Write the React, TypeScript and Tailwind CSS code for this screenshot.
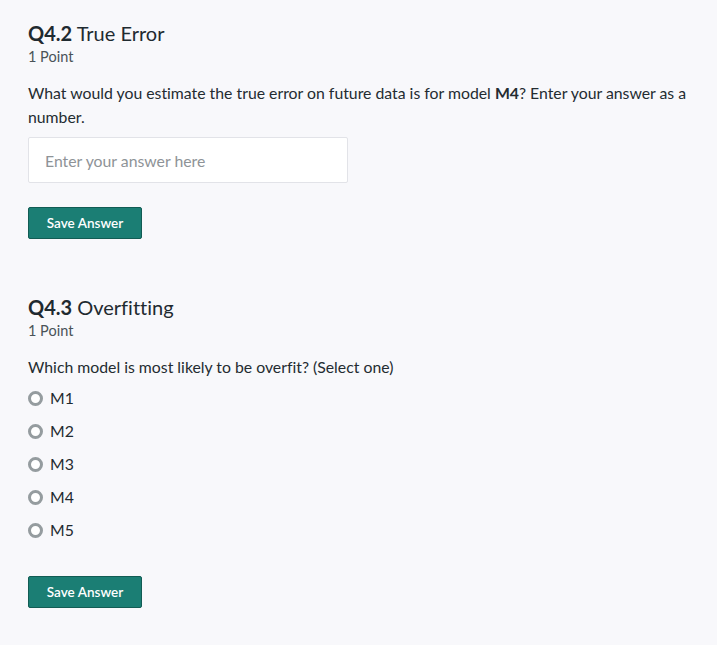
import React from "react";

const font = { fontFamily: "Lato, 'Open Sans', Arial, sans-serif" };

function Header({ num, title }: { num: string; title: string }) {
  return (
    <div>
      <h2 className="text-[20px] leading-[24px] text-[#1f2a30]">
        <span className="font-bold">{num}</span> {title}
      </h2>
      <div className="mt-[2px] text-[14.5px] leading-[20px] text-[#4a5358]">1 Point</div>
    </div>
  );
}

function SaveButton() {
  return (
    <button className="h-[32px] w-[114px] rounded-[2px] border border-[#125c54] bg-[#1b7e74] text-[13.5px] font-semibold text-white">
      Save Answer
    </button>
  );
}

export default function App() {
  const models = ["M1", "M2", "M3", "M4", "M5"];
  return (
    <div
      className="min-h-[645px] w-full bg-[#f8f8fb] px-[28px] pt-[21px] [font-variant-ligatures:none]"
      style={font}
    >
      <section>
        <Header num="Q4.2" title="True Error" />
        <p className="mt-[14px] text-[15.8px] leading-[24px] text-[#242c31]">
          What would you estimate the true error on future data is for model <b>M4</b>? Enter your answer as a number.
        </p>
        <input
          placeholder="Enter your answer here"
          className="mt-[8px] block h-[46px] w-[320px] rounded-[2px] border border-[#e2e3e8] bg-white px-[16px] text-[15.8px] text-[#242c31] outline-none placeholder:text-[#8e9397]"
        />
        <div className="mt-[24px]">
          <SaveButton />
        </div>
      </section>

      <section className="mt-[56px]">
        <Header num="Q4.3" title="Overfitting" />
        <p className="mt-[14px] text-[15.8px] leading-[24px] text-[#242c31]">
          Which model is most likely to be overfit? (Select one)
        </p>
        <div className="mt-[7px] flex flex-col gap-[9px]">
          {models.map((m) => (
            <label key={m} className="flex h-[24px] items-center gap-[7px] text-[15.8px] text-[#1f2a30]">
              <span className="box-border block h-[15px] w-[15px] rounded-full border-[3px] border-[#959c9f] bg-white" />
              {m}
            </label>
          ))}
        </div>
        <div className="mt-[34px]">
          <SaveButton />
        </div>
      </section>
    </div>
  );
}
